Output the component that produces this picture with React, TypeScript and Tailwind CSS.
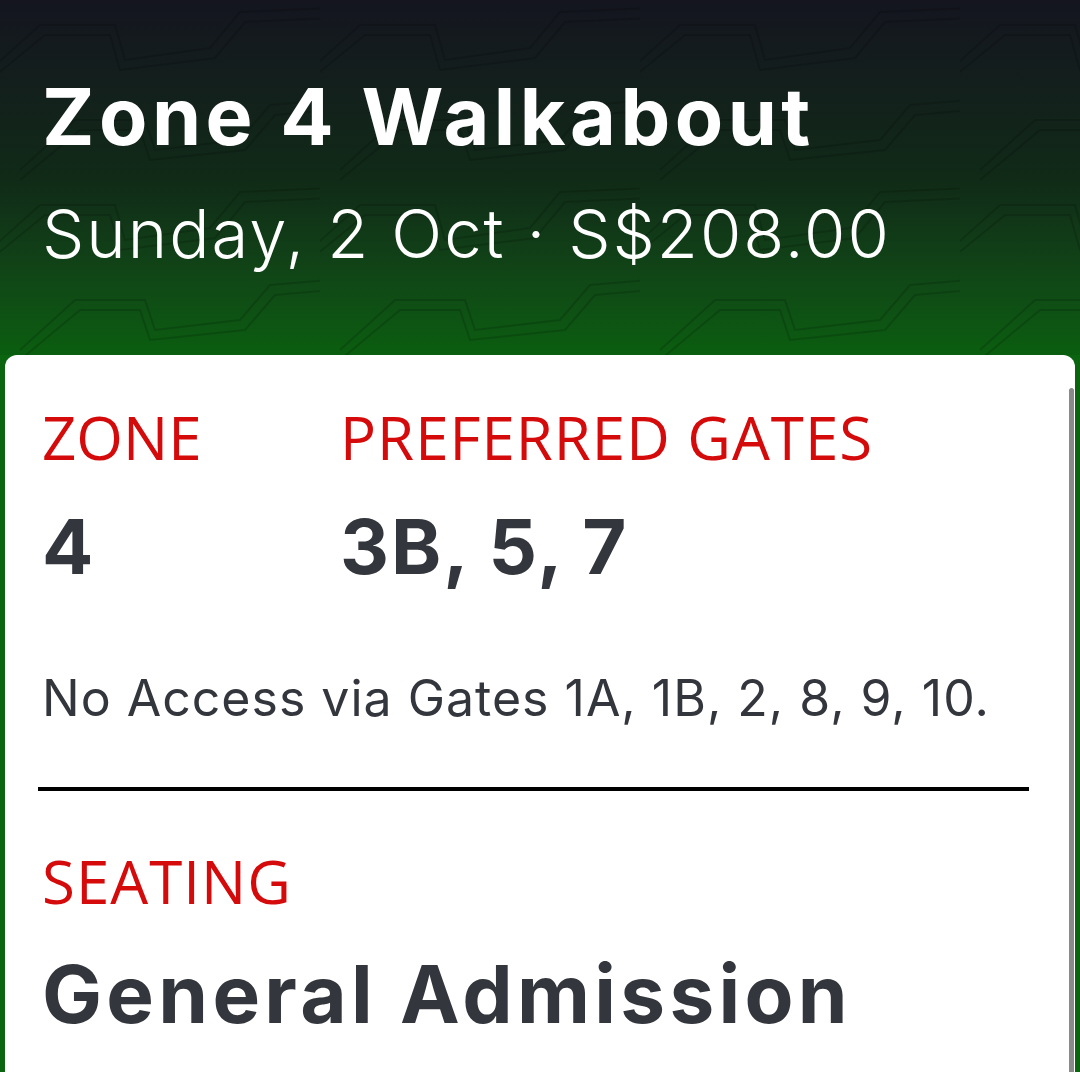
const font = { fontFamily: "Inter, 'Open Sans', sans-serif" };
const label = { fontFamily: "'Open Sans', sans-serif" };

function Pattern() {
  return (
    <svg className="absolute inset-0 h-full w-full opacity-[0.14]" aria-hidden="true">
      <defs>
        <pattern id="track" width="320" height="180" patternUnits="userSpaceOnUse">
          <path
            d="M-10 70 L40 25 L115 25 L125 60 L210 48 L240 12 L330 8 M-10 80 L45 35 L110 35 L120 70 L215 58 L245 22 L330 18 M20 170 L75 120 L145 120 L155 150 L240 140 L270 105 L330 100 M20 180 L80 130 L140 130 L150 160 L245 150 L275 115 L330 110"
            fill="none"
            stroke="#000"
            strokeWidth="2"
          />
        </pattern>
      </defs>
      <rect width="100%" height="100%" fill="url(#track)" />
    </svg>
  );
}

export default function App() {
  return (
    <div className="min-h-[1072px] w-[1080px] bg-[#0b6410] overflow-hidden" style={font}>
      <div className="relative h-[355px] bg-gradient-to-b from-[#14151f] via-[#102a17] to-[#0a5e0f] px-[42px] pt-[68px]">
        <Pattern />
        <h1 className="relative text-[79px] leading-[96px] font-bold tracking-[4.5px] text-white">
          Zone 4 Walkabout
        </h1>
        <p className="relative mt-[30px] text-[67px] leading-[80px] font-light tracking-[2px] text-white">
          Sunday, 2 Oct · S$208.00
        </p>
      </div>

      <div className="relative mx-[5px] h-[717px] rounded-t-[12px] bg-white pl-[37px] pr-[50px] pt-[44px]">
        <div className="absolute right-[1px] top-[33px] bottom-0 w-[5px] rounded-t-sm bg-[#8a8a8a]" />
        <div className="grid grid-cols-[298px_1fr]">
          <div className="text-[60px] leading-[76px] text-[#d50a0a]" style={label}>
            ZONE
          </div>
          <div className="text-[60px] leading-[76px] tracking-[1px] text-[#d50a0a]" style={label}>
            PREFERRED GATES
          </div>
          <div className="mt-[26px] text-[76px] leading-[90px] font-bold tracking-[2px] text-[#33363d]">4</div>
          <div className="mt-[26px] text-[76px] leading-[90px] font-bold tracking-[2px] text-[#33363d]">3B, 5, 7</div>
        </div>
        <p className="mt-[72px] text-[50px] leading-[70px] tracking-[1px] text-[#33363d]">
          No Access via Gates 1A, 1B, 2, 8, 9, 10.
        </p>
        <div className="ml-[-4px] mr-[-4px] mt-[54px] h-[4px] bg-black" />
        <div className="mt-[52px] text-[60px] leading-[76px] tracking-[1px] text-[#d50a0a]" style={label}>
          SEATING
        </div>
        <div className="mt-[27px] text-[80px] leading-[96px] font-bold tracking-[4.3px] text-[#33363d]">
          General Admission
        </div>
      </div>
    </div>
  );
}
